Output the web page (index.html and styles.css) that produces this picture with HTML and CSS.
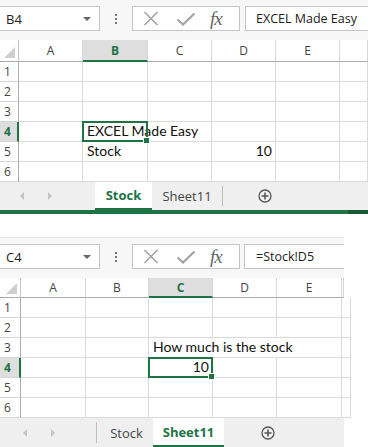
FILE: index.html
```html
<!DOCTYPE html>
<html lang="en">
<head>
    <meta charset="UTF-8">
    <title>Stock sheets</title>
    <link rel="stylesheet" href="styles.css">
</head>
<body>

    <!-- First window: Stock sheet -->
    <div class="window">
        <div class="formula-bar">
            <div class="name-box"><span>B4</span><i class="caret"></i></div>
            <div class="grip"><i></i><i></i><i></i></div>
            <div class="fx-box">
                <svg class="icon-x" width="16" height="15" viewBox="0 0 16 15"><path d="M1.5 1 L14.5 14 M14.5 1 L1.5 14" stroke="#a3a3a3" stroke-width="1.6" fill="none"/></svg>
                <svg class="icon-check" width="20" height="14" viewBox="0 0 20 14"><path d="M1.5 7.5 L7 12.5 L18.5 1.5" stroke="#a3a3a3" stroke-width="2.2" fill="none"/></svg>
                <span class="fx">fx</span>
            </div>
            <div class="formula-input">EXCEL Made Easy</div>
        </div>

        <div class="sheet sheet-stock">
            <div class="corner"><i></i></div>
            <div class="col-head">A</div>
            <div class="col-head active">B</div>
            <div class="col-head">C</div>
            <div class="col-head">D</div>
            <div class="col-head">E</div>
            <div class="col-head"></div>

            <div class="row-head">1</div>
            <div class="cell"></div><div class="cell"></div><div class="cell"></div><div class="cell"></div><div class="cell"></div><div class="cell"></div>

            <div class="row-head">2</div>
            <div class="cell"></div><div class="cell"></div><div class="cell"></div><div class="cell"></div><div class="cell"></div><div class="cell"></div>

            <div class="row-head">3</div>
            <div class="cell"></div><div class="cell"></div><div class="cell"></div><div class="cell"></div><div class="cell"></div><div class="cell"></div>

            <div class="row-head active">4</div>
            <div class="cell"></div>
            <div class="cell spill selected"><span>EXCEL Made Easy</span></div>
            <div class="cell"></div><div class="cell"></div><div class="cell"></div><div class="cell"></div>

            <div class="row-head">5</div>
            <div class="cell"></div>
            <div class="cell"><span>Stock</span></div>
            <div class="cell"></div>
            <div class="cell num"><span>10</span></div>
            <div class="cell"></div><div class="cell"></div>

            <div class="row-head">6</div>
            <div class="cell"></div><div class="cell"></div><div class="cell"></div><div class="cell"></div><div class="cell"></div><div class="cell"></div>
        </div>

        <div class="tabs tabs-stock">
            <div class="tab-nav"><i class="arrow-left"></i><i class="arrow-right"></i></div>
            <div class="tab current">Stock</div>
            <div class="tab">Sheet11</div>
            <div class="tab-sep"></div>
            <div class="add-sheet">
                <svg width="14" height="14" viewBox="0 0 14 14"><circle cx="7" cy="7" r="6" stroke="#555" stroke-width="1.3" fill="none"/><path d="M7 3.5 V10.5 M3.5 7 H10.5" stroke="#555" stroke-width="1.6"/></svg>
            </div>
        </div>
        <div class="status-bar"><i></i></div>
    </div>

    <!-- Second window: Sheet11 -->
    <div class="window window-second">
        <div class="formula-bar">
            <div class="name-box"><span>C4</span><i class="caret"></i></div>
            <div class="grip"><i></i><i></i><i></i></div>
            <div class="fx-box">
                <svg class="icon-x" width="16" height="15" viewBox="0 0 16 15"><path d="M1.5 1 L14.5 14 M14.5 1 L1.5 14" stroke="#a3a3a3" stroke-width="1.6" fill="none"/></svg>
                <svg class="icon-check" width="20" height="14" viewBox="0 0 20 14"><path d="M1.5 7.5 L7 12.5 L18.5 1.5" stroke="#a3a3a3" stroke-width="2.2" fill="none"/></svg>
                <span class="fx">fx</span>
            </div>
            <div class="formula-input">=Stock!D5</div>
        </div>

        <div class="sheet sheet-eleven">
            <div class="corner"><i></i></div>
            <div class="col-head">A</div>
            <div class="col-head">B</div>
            <div class="col-head active">C</div>
            <div class="col-head">D</div>
            <div class="col-head">E</div>
            <div class="col-head"></div>

            <div class="row-head">1</div>
            <div class="cell"></div><div class="cell"></div><div class="cell"></div><div class="cell"></div><div class="cell"></div><div class="cell"></div>

            <div class="row-head">2</div>
            <div class="cell"></div><div class="cell"></div><div class="cell"></div><div class="cell"></div><div class="cell"></div><div class="cell"></div>

            <div class="row-head">3</div>
            <div class="cell"></div><div class="cell"></div>
            <div class="cell spill"><span>How much is the stock</span></div>
            <div class="cell spill"></div>
            <div class="cell"></div><div class="cell"></div>

            <div class="row-head active">4</div>
            <div class="cell"></div><div class="cell"></div>
            <div class="cell num selected"><span>10</span></div>
            <div class="cell"></div><div class="cell"></div><div class="cell"></div>

            <div class="row-head">5</div>
            <div class="cell"></div><div class="cell"></div><div class="cell"></div><div class="cell"></div><div class="cell"></div><div class="cell"></div>

            <div class="row-head">6</div>
            <div class="cell"></div><div class="cell"></div><div class="cell"></div><div class="cell"></div><div class="cell"></div><div class="cell"></div>
        </div>

        <div class="tabs tabs-eleven">
            <div class="tab-nav"><i class="arrow-left"></i><i class="arrow-right"></i></div>
            <div class="tab-sep"></div>
            <div class="tab">Stock</div>
            <div class="tab current">Sheet11</div>
            <div class="add-sheet">
                <svg width="14" height="14" viewBox="0 0 14 14"><circle cx="7" cy="7" r="6" stroke="#555" stroke-width="1.3" fill="none"/><path d="M7 3.5 V10.5 M3.5 7 H10.5" stroke="#555" stroke-width="1.6"/></svg>
            </div>
        </div>
    </div>

</body>
</html>
```

FILE: styles.css
```css
/* Reset */
* {
    margin: 0;
    padding: 0;
    box-sizing: border-box;
}

body {
    background-color: #fff;
    font-family: 'Open Sans', 'Noto Sans', sans-serif;
    color: #222;
    width: 368px;
    height: 447px;
    overflow: hidden;
}

i {
    display: block;
}

.window {
    width: 368px;
}

.window-second {
    width: 344px;
    margin-top: 23px;
    border-top: 1px solid #e4e4e4;
}

/* Formula bar */
.formula-bar {
    display: flex;
    align-items: flex-start;
    height: 40px;
    padding-top: 6px;
    background-color: #f7f7f7;
}

.name-box {
    width: 100px;
    height: 25px;
    display: flex;
    align-items: center;
    justify-content: space-between;
    padding: 0 6px 0 6px;
    background-color: #fff;
    border: 1px solid #c6c6c6;
    border-left: none;
    font-size: 13px;
    color: #222;
}

.caret {
    width: 0;
    height: 0;
    border-left: 4px solid transparent;
    border-right: 4px solid transparent;
    border-top: 4px solid #666;
    margin-right: 2px;
}

.grip {
    width: 32px;
    height: 25px;
    display: flex;
    flex-direction: column;
    align-items: center;
    justify-content: center;
    gap: 2px;
}

.grip i {
    width: 2px;
    height: 2px;
    background-color: #777;
}

.fx-box {
    width: 108px;
    height: 25px;
    display: flex;
    align-items: center;
    padding-left: 10px;
    background-color: #fff;
    border: 1px solid #c6c6c6;
}

.icon-check {
    margin-left: 17px;
}

.fx {
    margin-left: 14px;
    font-family: 'Liberation Serif', serif;
    font-style: italic;
    font-size: 19px;
    color: #666;
    letter-spacing: -1px;
}

.formula-input {
    flex: 1;
    height: 25px;
    margin-left: 5px;
    padding-left: 10px;
    display: flex;
    align-items: center;
    background-color: #fff;
    border: 1px solid #c6c6c6;
    border-right: none;
    font-size: 12.5px;
    color: #222;
}

.window-second .formula-input {
    margin-left: 4px;
    padding-left: 11px;
}

/* Grid */
.sheet {
    display: grid;
}

.sheet-stock {
    grid-template-columns: 19px 64px 65px 64px 64px 64px 28px;
    grid-template-rows: 22px repeat(6, 20px);
}

.sheet-eleven {
    grid-template-columns: 21px 65px 63px 64px 64px 65px 2px;
    grid-template-rows: 20px repeat(6, 20px);
}

.corner {
    display: flex;
    align-items: flex-end;
    justify-content: flex-end;
    padding: 0 3px 3px 0;
    background-color: #fff;
    border-right: 1px solid #c6c6c6;
    border-bottom: 1px solid #ababab;
}

.corner i {
    width: 0;
    height: 0;
    border-left: 11px solid transparent;
    border-bottom: 11px solid #cfcfcf;
}

.col-head {
    display: flex;
    align-items: center;
    justify-content: center;
    background-color: #fff;
    border-right: 1px solid #d6d6d6;
    border-bottom: 1px solid #ababab;
    font-size: 12px;
    color: #444;
}

.col-head.active {
    background-color: #dedede;
    border-bottom: 2px solid #217346;
    color: #217346;
    font-weight: 700;
}

.row-head {
    display: flex;
    align-items: center;
    padding-left: 4px;
    background-color: #fff;
    border-right: 1px solid #ababab;
    border-bottom: 1px solid #d6d6d6;
    font-size: 12px;
    color: #444;
}

.row-head.active {
    background-color: #dedede;
    border-right: 2px solid #217346;
    color: #217346;
    font-weight: 700;
}

.cell {
    display: flex;
    align-items: flex-end;
    padding: 0 4px 2px 4px;
    border-right: 1px solid #dadada;
    border-bottom: 1px solid #dadada;
    font-family: 'Lato', 'Liberation Sans', sans-serif;
    font-size: 14px;
    color: #111;
    white-space: nowrap;
}

.cell.spill {
    border-right-color: transparent;
}

.cell.num {
    justify-content: flex-end;
    padding-right: 3px;
}

.cell.selected {
    position: relative;
}

.cell.selected::after {
    content: "";
    position: absolute;
    left: -1px;
    top: -1px;
    right: -1px;
    bottom: -1px;
    border: 2px solid #217346;
}

.cell.selected::before {
    content: "";
    position: absolute;
    right: -3px;
    bottom: -3px;
    width: 5px;
    height: 5px;
    background-color: #217346;
    border: 1px solid #fff;
    z-index: 2;
}

/* Sheet tabs */
.tabs {
    display: flex;
    align-items: stretch;
    height: 28px;
    background-color: #efefef;
}

.tabs-eleven {
    height: 29px;
}

.tab-nav {
    display: flex;
    align-items: center;
    gap: 24px;
    padding-left: 20px;
    width: 95px;
}

.tabs-eleven .tab-nav {
    width: 96px;
    padding-left: 23px;
}

.arrow-left {
    width: 0;
    height: 0;
    border-top: 4px solid transparent;
    border-bottom: 4px solid transparent;
    border-right: 4px solid #c4c4c4;
}

.arrow-right {
    width: 0;
    height: 0;
    border-top: 4px solid transparent;
    border-bottom: 4px solid transparent;
    border-left: 4px solid #c4c4c4;
}

.tab {
    display: flex;
    align-items: center;
    padding: 0 11px;
    font-size: 13px;
    color: #444;
}

.tab.current {
    background-color: #fff;
    border-bottom: 2px solid #217346;
    color: #217346;
    font-weight: 700;
}

.tabs-stock .tab.current {
    width: 57px;
    justify-content: center;
}

.tabs-stock .tab {
    width: 70px;
    justify-content: center;
}

.tabs-eleven .tab {
    width: 53px;
    margin-left: 3px;
    justify-content: center;
}

.tabs-eleven .tab.current {
    width: 71px;
    margin-left: 0;
}

.tab-sep {
    width: 1px;
    margin: 4px 0;
    background-color: #bdbdbd;
}

.add-sheet {
    display: flex;
    align-items: center;
    margin-left: 35px;
}

.tabs-eleven .add-sheet {
    margin-left: 37px;
}

.status-bar {
    height: 4px;
    background-color: #217346;
    display: flex;
    justify-content: flex-end;
}

.status-bar i {
    width: 20px;
    background-color: #185a35;
}
```
